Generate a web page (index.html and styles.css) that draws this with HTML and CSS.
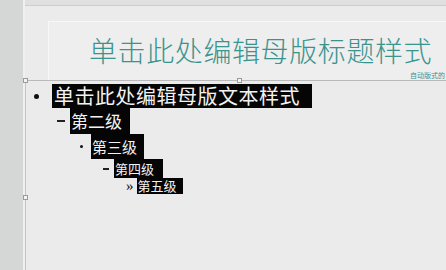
FILE: index.html
```html
<!DOCTYPE html>
<html lang="zh">
<head>
<meta charset="utf-8">
<link rel="stylesheet" href="styles.css">
</head>
<body>
<div class="app">
  <div class="strip"></div>
  <div class="stage">
    <div class="slide">
      <div class="title-box">
        <div class="title">单击此处编辑母版标题样式</div>
        <div class="auto">自动版式的</div>
      </div>
      <div class="body-box">
        <span class="handle h-tl"></span>
        <span class="handle h-tm"></span>
        <span class="handle h-ml"></span>
        <div class="row l1"><span class="mark dot big"></span><span class="hl">单击此处编辑母版文本样式</span></div>
        <div class="row l2"><span class="mark dash"></span><span class="hl">第二级</span></div>
        <div class="row l3"><span class="mark dot small"></span><span class="hl">第三级</span></div>
        <div class="row l4"><span class="mark dash short"></span><span class="hl">第四级</span></div>
        <div class="row l5"><span class="mark raquo">»</span><span class="hl">第五级</span></div>
      </div>
    </div>
  </div>
</div>
</body>
</html>
```

FILE: styles.css
```css
html, body {
  margin: 0;
  padding: 0;
  width: 446px;
  height: 270px;
  overflow: hidden;
  background: #e0e0e0;
  font-family: "Noto Sans CJK SC", "DejaVu Sans", sans-serif;
}
.app {
  display: flex;
  height: 270px;
}
.strip {
  width: 23px;
  flex: none;
  background: #d5d7d7;
  border-right: 2px solid #f0f0f0;
}
.stage {
  flex: 1;
  padding-top: 5px;
  display: flex;
  flex-direction: column;
}
.slide {
  flex: 1;
  background: #ebebeb;
  border-top: 1px solid #cdcdcd;
  display: flex;
  flex-direction: column;
}
.title-box {
  margin: 15px 0 0 23px;
  height: 58px;
  border: 1px solid #f7f7f7;
  border-right: none;
  border-bottom: none;
  background: #eeeeee;
  display: flex;
  flex-direction: column;
  overflow: hidden;
}
.title {
  padding: 13px 0 0 40px;
  font-size: 28px;
  line-height: 30px;
  letter-spacing: 0.6px;
  font-weight: 300;
  color: #3a948e;
  white-space: nowrap;
}
.auto {
  align-self: flex-end;
  margin-top: 6px;
  margin-right: 1px;
  font-size: 7px;
  line-height: 8px;
  color: #3a8f94;
  white-space: nowrap;
}
.body-box {
  position: relative;
  flex: 1;
  border-top: 1px solid #b9b9b9;
  border-left: 1px solid #c4c4c4;
  padding-top: 3px;
  display: flex;
  flex-direction: column;
  align-items: flex-start;
}
.handle {
  position: absolute;
  width: 3px;
  height: 3px;
  border: 1px solid #9a9a9a;
  background: #f4f4f4;
}
.h-tl { left: -3px; top: -3px; }
.h-tm { left: 211px; top: -3px; }
.h-ml { left: -3px; top: 114px; }
.row {
  display: flex;
  align-items: center;
}
.hl {
  background: #050505;
  color: #f2f2f2;
  white-space: nowrap;
}
.mark {
  flex: none;
}
.dot {
  border-radius: 50%;
  background: #111;
}
.dot.big { width: 5px; height: 5px; margin-right: 13px; }
.dot.small { width: 3px; height: 3px; margin-right: 8px; }
.dash { width: 8px; height: 2px; background: #222; margin-right: 5px; }
.dash.short { width: 6px; margin-right: 5px; }
.raquo {
  font-family: "Liberation Serif", serif;
  font-size: 15px;
  line-height: 14px;
  color: #111;
  margin-right: 3px;
}
.l1 { padding-left: 8px; }
.l1 .hl { font-size: 20px; line-height: 24px; letter-spacing: 0.5px; padding: 0 12px 0 2px; }
.l2 { padding-left: 31px; }
.l2 .hl { font-size: 17px; line-height: 26px; padding: 0 8px 0 1px; }
.l3 { padding-left: 54px; }
.l3 .hl { font-size: 15px; line-height: 25px; padding: 0 7px 0 1px; }
.l4 { padding-left: 77px; }
.l4 .hl { font-size: 13px; line-height: 19px; padding: 0 9px 0 1px; }
.l5 { padding-left: 100px; }
.l5 .hl { font-size: 13px; line-height: 16px; padding: 0 6px 0 1px; }
```
